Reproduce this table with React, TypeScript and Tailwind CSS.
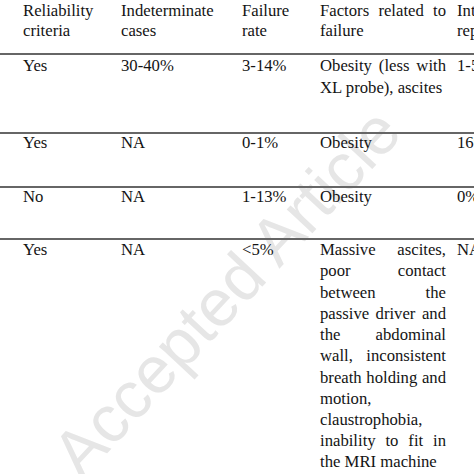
type Row = {
  cells: string[];
  height: string;
  shift: string;
};

const rows: Row[] = [
  { cells: ["Yes", "30-40%", "3-14%", "Obesity (less with XL probe), ascites", "1-5%"], height: "h-[76.4px]", shift: "mt-0" },
  { cells: ["Yes", "NA", "0-1%", "Obesity", "16%"], height: "h-[54px]", shift: "-mt-[2px]" },
  { cells: ["No", "NA", "1-13%", "Obesity", "0%"], height: "h-[52.6px]", shift: "-mt-[2px]" },
  {
    cells: [
      "Yes",
      "NA",
      "<5%",
      "Massive ascites, poor contact between the passive driver and the abdominal wall, inconsistent breath holding and motion, claustrophobia, inability to fit in the MRI machine",
      "NA",
    ],
    height: "h-[240px]",
    shift: "-mt-[1px]",
  },
];

const grid = "grid grid-cols-[116px_121px_78px_136px_1fr]";

function Line() {
  return <div className="h-[2px] bg-[#666666]" />;
}

export default function App() {
  return (
    <div className="relative h-[474px] w-[474px] overflow-hidden bg-white font-['Liberation_Serif',serif] text-[16.7px] text-[#141414]">
      {/* watermark */}
      <div className="pointer-events-none absolute left-[226px] top-[292px] -translate-x-1/2 -translate-y-1/2 -rotate-[47deg] whitespace-nowrap font-['Liberation_Sans',sans-serif] text-[66px] leading-none text-[#e6e6e6]">
        Accepted Article
      </div>

      <div className="relative z-10">
        {/* header */}
        <div className={`${grid} h-[53.3px] pt-[1.4px] leading-[19.3px]`}>
          <div className="pl-[23px] pr-[5px]">Reliability criteria</div>
          <div className="px-[5px]">Indeterminate cases</div>
          <div className="px-[5px]">Failure rate</div>
          <div className="px-[5px] text-justify">Factors related to failure</div>
          <div className="pl-[6px] whitespace-nowrap">
            Interobserver
            <br />
            reproducibility
          </div>
        </div>

        {rows.map((r, i) => (
          <div key={i}>
            <Line />
            <div className={r.height}>
              <div className={`${grid} ${r.shift} leading-[21.2px]`}>
                <div className="pl-[23px] pr-[5px]">{r.cells[0]}</div>
                <div className="px-[5px]">{r.cells[1]}</div>
                <div className="px-[5px]">{r.cells[2]}</div>
                <div className="px-[5px] text-justify">{r.cells[3]}</div>
                <div className="pl-[6px] whitespace-nowrap">{r.cells[4]}</div>
              </div>
            </div>
          </div>
        ))}
      </div>
    </div>
  );
}
